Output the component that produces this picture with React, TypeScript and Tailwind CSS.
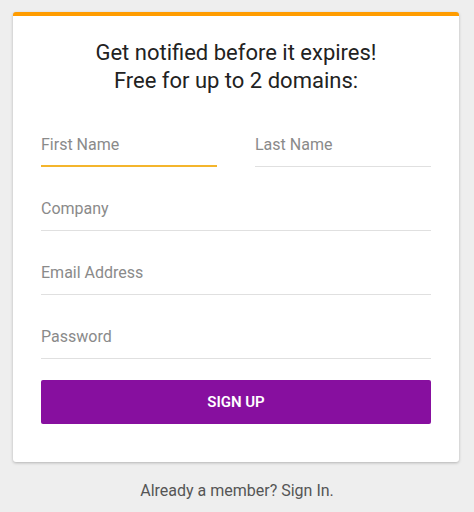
import React from 'react'

const Field: React.FC<{ placeholder: string; type?: string; active?: boolean }> = ({ placeholder, type = 'text', active }) => {
  return (
    <div
      className={
        active
          ? 'border-b-2 border-[#f4b52c] pb-[8px]'
          : 'border-b border-[#e0e0e0] pb-[9px]'
      }
    >
      <input
        type={type}
        placeholder={placeholder}
        className="block w-full h-[24px] bg-transparent outline-none text-[16px] leading-[24px] text-[#333] placeholder:text-[#8a8a8a]"
      />
    </div>
  )
}

const App: React.FC = () => {
  return (
    <div className="min-h-screen bg-[#eeeeee] pt-[12px] font-['Roboto','Liberation_Sans',sans-serif]">
      <div className="ml-[13px] w-[446px] bg-white border-t-4 border-[#ff9c00] rounded-[3px] shadow-[0_1px_3px_rgba(0,0,0,0.25)] px-[28px] pt-[23px] pb-[38px]">
        <h1 className="text-center text-[22px] leading-[28px] text-[#222]">
          Get notified before it expires!
          <br />
          Free for up to 2 domains:
        </h1>

        <form className="mt-[38px] flex flex-col gap-[30px]" onSubmit={(e) => e.preventDefault()}>
          <div className="grid grid-cols-2 gap-x-[38px]">
            <Field placeholder="First Name" active />
            <Field placeholder="Last Name" />
          </div>
          <Field placeholder="Company" />
          <Field placeholder="Email Address" type="email" />
          <Field placeholder="Password" type="password" />

          <button
            type="submit"
            className="-mt-[9px] h-[44px] w-full rounded-[2px] bg-[#870f9f] text-white text-[15px] font-semibold"
          >
            SIGN UP
          </button>
        </form>
      </div>

      <p className="mt-[17px] text-center text-[16px] leading-[24px] text-[#555]">
        Already a member? Sign In.
      </p>
    </div>
  )
}

export default App
